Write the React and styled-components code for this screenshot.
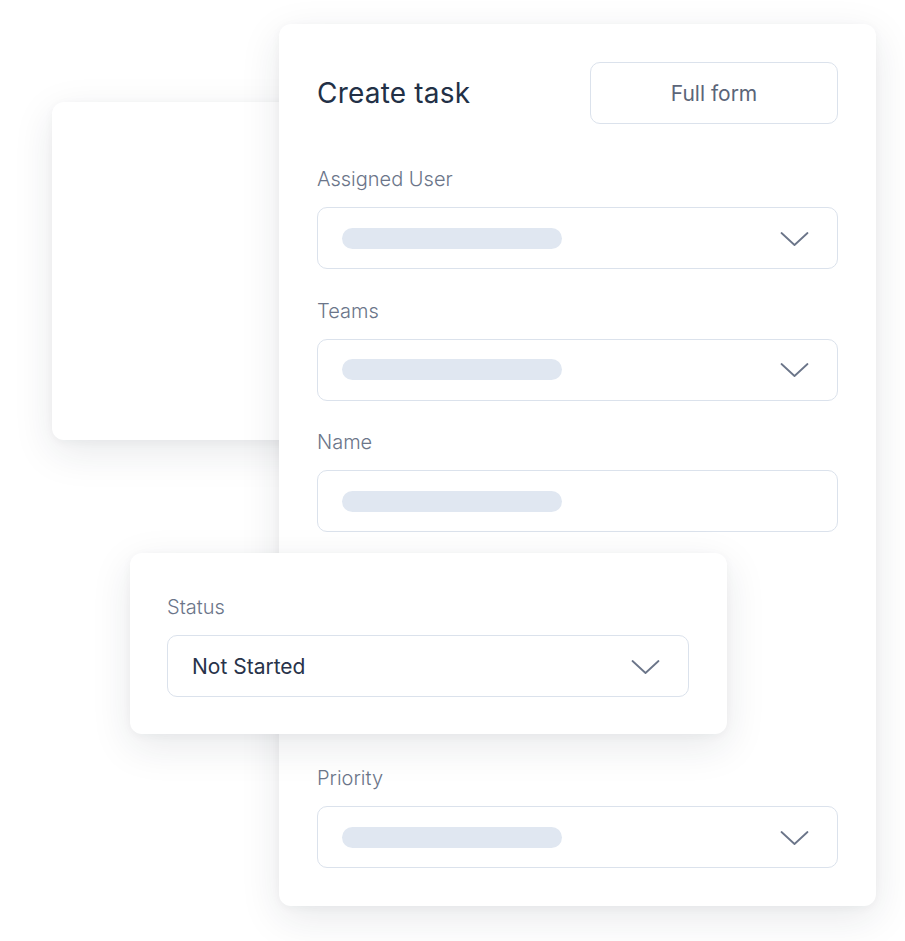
import styled, { createGlobalStyle } from 'styled-components'

const GlobalStyle = createGlobalStyle`
  * { box-sizing: border-box; }
  body {
    margin: 0;
    background: #ffffff;
    font-family: Inter, "Noto Sans", sans-serif;
  }
`

function Chevron() {
  return (
    <ChevronIcon width="29" height="16" viewBox="0 0 29 16" fill="none">
      <polyline points="1.5,2 14.5,14 27.5,2" stroke="#6b7589" strokeWidth="1.8" strokeLinecap="round" strokeLinejoin="round" />
    </ChevronIcon>
  )
}

function Field({ label, select, value }) {
  return (
    <FieldGroup>
      <Label>{ label }</Label>
      <Control>
        { value ? <Value>{ value }</Value> : <Placeholder /> }
        { select && <Chevron /> }
      </Control>
    </FieldGroup>
  )
}

export default function App() {
  return (
    <Stage>
      <GlobalStyle />
      <BackCard />
      <MainCard>
        <Header>
          <Title>Create task</Title>
          <FullFormButton>Full form</FullFormButton>
        </Header>
        <Fields>
          <Field label="Assigned User" select />
          <Field label="Teams" select />
          <Field label="Name" />
          <Spacer />
          <Field label="Priority" select />
        </Fields>
      </MainCard>
      <StatusCard>
        <Field label="Status" select value="Not Started" />
      </StatusCard>
    </Stage>
  )
}

const Stage = styled.div`
  position: relative;
  width: 905px;
  height: 941px;
  padding: 24px 29px 0 279px;
`

const cardShadow = `
  background: #ffffff;
  border-radius: 12px;
  box-shadow: 0 12px 40px rgba(30, 40, 60, 0.1), 0 2px 10px rgba(30, 40, 60, 0.04);
`

const BackCard = styled.div`
  ${ cardShadow }
  position: absolute;
  left: 52px;
  top: 102px;
  width: 280px;
  height: 338px;
`

const MainCard = styled.div`
  ${ cardShadow }
  position: relative;
  width: 597px;
  height: 882px;
  padding: 38px;
`

const StatusCard = styled.div`
  ${ cardShadow }
  position: absolute;
  left: 130px;
  top: 553px;
  width: 597px;
  height: 181px;
  padding: 42px 38px 38px 37px;
`

const Header = styled.div`
  display: flex;
  align-items: center;
  justify-content: space-between;
  margin-bottom: 43px;
`

const Title = styled.h1`
  margin: 0;
  font-size: 28px;
  font-weight: 400;
  letter-spacing: 0.2px;
  color: #223046;
`

const FullFormButton = styled.button`
  width: 248px;
  height: 62px;
  border: 1.5px solid #dbe2ec;
  border-radius: 10px;
  background: #ffffff;
  font-family: inherit;
  font-size: 21px;
  color: #5b6579;
`

const Fields = styled.div`
  display: flex;
  flex-direction: column;
  gap: 29.5px;
`

const FieldGroup = styled.div`
  display: flex;
  flex-direction: column;
  gap: 16px;
`

const Label = styled.div`
  height: 24px;
  line-height: 24px;
  font-size: 20px;
  font-weight: 300;
  color: #6b7589;
`

const Control = styled.div`
  display: flex;
  align-items: center;
  justify-content: space-between;
  height: 62px;
  padding: 1px 28px 0 24px;
  border: 1.5px solid #dbe2ec;
  border-radius: 10px;
  background: #ffffff;
`

const Placeholder = styled.div`
  width: 220px;
  height: 21px;
  margin-top: -1px;
  border-radius: 11px;
  background: #e0e7f1;
`

const Value = styled.div`
  margin-top: -1px;
  font-size: 21px;
  font-weight: 400;
  color: #28334a;
`

const ChevronIcon = styled.svg`
  flex: none;
`

const Spacer = styled.div`
  height: 175px;
`
